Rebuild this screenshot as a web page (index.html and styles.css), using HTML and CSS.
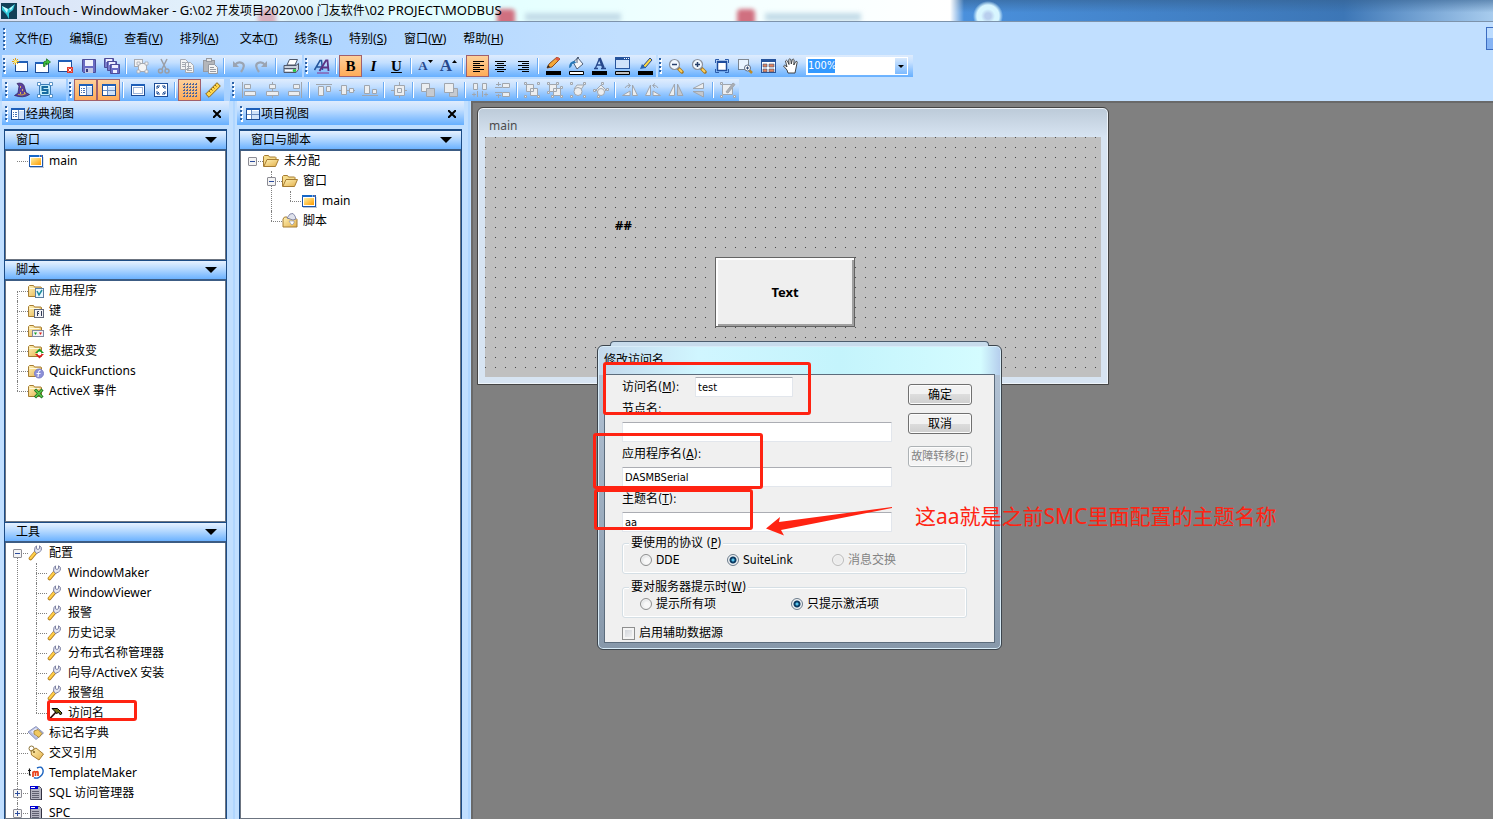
FILE: index.html
```
<!DOCTYPE html>
<html lang="zh-CN">
<head>
    <meta charset="UTF-8">
    <meta name="viewport" content="width=device-width, initial-scale=1.0">
    <title>InTouch - WindowMaker</title>
    <link rel="stylesheet" href="styles.css">
</head>
<body>
<!-- shared icons -->
<svg class="defs" width="0" height="0" aria-hidden="true">
    <defs>
        <linearGradient id="g-folder" x1="0" y1="0" x2="1" y2="1"><stop offset="0" stop-color="#fff2b8"/><stop offset="1" stop-color="#e3b04a"/></linearGradient>
        <linearGradient id="g-orange" x1="0" y1="0" x2="1" y2="1"><stop offset="0" stop-color="#fff0a0"/><stop offset="1" stop-color="#ff9c00"/></linearGradient>
    </defs>
    <symbol id="i-window" viewBox="0 0 16 16">
        <path d="M2 14.5h14V4" fill="none" stroke="#b9c4d6"/>
        <rect x="1.5" y="2.5" width="13" height="11" fill="#fff" stroke="#1c55a8"/>
        <path d="M1 3h14" stroke="#1668c8" stroke-width="2"/>
        <path d="M11 3h1" stroke="#fff"/><path d="M13 3h1" stroke="#ff6a3c"/>
        <rect x="3" y="5" width="10" height="7" fill="url(#g-orange)"/>
    </symbol>
    <symbol id="i-folder" viewBox="0 0 16 16">
        <path d="M.5 13.500V3.500l1-1h4l1 1.500h6.500l.5.500v9z" fill="url(#g-folder)" stroke="#a67c32"/>
        <path d="M1.500 5.500h10" stroke="#fffbe0"/>
    </symbol>
    <symbol id="i-open" viewBox="0 0 16 16">
        <path d="M.5 13.500V3.500l1-1h4l1 1.500h6l.5.500v2" fill="#f6dc8c" stroke="#a67c32"/>
        <path d="M.8 13.500L4 6.500h11.500l-3 7z" fill="url(#g-folder)" stroke="#a67c32"/>
    </symbol>
    <symbol id="i-wrench" viewBox="0 0 16 16">
        <path d="M2.500 13.500L8 7" stroke="#b07a1c" stroke-width="3.600" stroke-linecap="round"/>
        <path d="M2.500 13.200L8 6.700" stroke="#ffcf4a" stroke-width="2.200" stroke-linecap="round"/>
        <path d="M6.500 6L7 2.500 8.500 .8v3l1.500.7 1.500-1V.8l1.800 1.500v3L11.500 7l-3 1.500z" fill="#e4e6f2" stroke="#70759a" stroke-width=".9"/>
    </symbol>
    <symbol id="i-db" viewBox="0 0 16 16">
        <path d="M2.500 1.500h9l2 2v11h-11z" fill="#b4b4c0" stroke="#505060"/>
        <path d="M2 1h8v3H2z" fill="#0000d0"/><path d="M3 2.500h4" stroke="#fff"/>
        <path d="M4 6.500h7M4 8.500h7M4 10.500h7M4 12.500h7" stroke="#606070"/>
        <path d="M13.500 4v11" stroke="#303040"/>
    </symbol>
    <symbol id="i-classic" viewBox="0 0 16 16">
        <rect x="1.500" y="2.500" width="13" height="11" fill="#fff" stroke="#1c4c96"/><path d="M1 3h14" stroke="#1f5fb8" stroke-width="2"/>
        <path d="M9 5h5v8H9z" fill="#cfe2fa"/><path d="M8.500 4v9" stroke="#6a8cc0"/>
        <path d="M3 6.500h1M5 6.500h2M3 8.500h1M5 8.500h2M3 10.500h1M5 10.500h2" stroke="#4a74b4"/>
    </symbol>
    <symbol id="i-project" viewBox="0 0 16 16">
        <rect x="1.500" y="2.500" width="13" height="11" fill="#fff" stroke="#1c4c96"/><path d="M1 3h14" stroke="#1f5fb8" stroke-width="2"/>
        <path d="M7 5h7v8H7z" fill="#cfe2fa"/><path d="M6.500 4v9M2 8.500h12" stroke="#6a8cc0"/>
    </symbol>
</svg>

<div class="app">
    <header class="titlebar">
        <svg class="logo" viewBox="0 0 16 16"><rect width="16" height="16" fill="#123f58"/><path d="M1 3l6 3 7-5-2 6-4 3v6l-3-5-4-4z" fill="#2fc9dc"/><path d="M1 3l6 3-1 4zM8 6l5-4-3 5z" fill="#c7fbff"/></svg>
        <h1>InTouch - WindowMaker - G:\02 <span class="cjk">开发项目</span>2020\00 <span class="cjk">门友软件</span>\02 PROJECT\MODBUS</h1>
        <span class="ghost ghost-first"></span>
        <span class="ghost ghost-second"></span>
        <span class="ghost ghost-third"></span>
    </header>

    <nav class="menubar">
        <span class="grip grip-tall"></span>
        <a href="#" class="first">文件(<u>F</u>)</a>
        <a href="#">编辑(<u>E</u>)</a>
        <a href="#">查看(<u>V</u>)</a>
        <a href="#">排列(<u>A</u>)</a>
        <a href="#" class="spaced">文本(<u>T</u>)</a>
        <a href="#">线条(<u>L</u>)</a>
        <a href="#">特别(<u>S</u>)</a>
        <a href="#">窗口(<u>W</u>)</a>
        <a href="#">帮助(<u>H</u>)</a>
        <button class="mdi-button" aria-label="最小化"></button>
    </nav>

    <div class="toolbars">
        <div class="toolbar-row">
            <div class="toolbar">
                <span class="grip"></span>
                <button class="tool" aria-label="新建窗口"><svg viewBox="0 0 16 16"><rect x="3.500" y="3.500" width="12" height="10" fill="#fff" stroke="#1c4c96"/><path d="M3 4h13" stroke="#1f5fb8" stroke-width="2"/><path d="M3.500 0v7M0 3.500h7M1 1l5 5M6 1L1 6" stroke="#e0a010"/><circle cx="3.500" cy="3.500" r="1.500" fill="#fff27a"/></svg></button>
                <button class="tool" aria-label="打开窗口"><svg viewBox="0 0 16 16"><rect x=".5" y="4.500" width="13" height="10" fill="#fff" stroke="#1c4c96"/><path d="M0 5h14" stroke="#1f5fb8" stroke-width="2"/><path d="M8.500 8.500V5q0-2 3-2V.8L15.500 4l-4 3V5q-1.500 0-1.500 3.500z" fill="#3cc03c" stroke="#176b17" stroke-width=".7"/></svg></button>
                <button class="tool" aria-label="关闭窗口"><svg viewBox="0 0 16 16"><rect x=".5" y="2.500" width="13" height="11" fill="#fff" stroke="#1c4c96"/><path d="M0 3h14" stroke="#1f5fb8" stroke-width="2"/><rect x="9.500" y="9.500" width="5" height="5" fill="#e23a2c" stroke="#e23a2c"/><path d="M10.500 10.500l3 3M13.500 10.500l-3 3" stroke="#fff"/></svg></button>
                <button class="tool" aria-label="保存"><svg viewBox="0 0 16 16"><path d="M1.500 1.500h13v13h-12l-1-1z" fill="#6a6cc4" stroke="#4c4c98"/><path d="M4 2h8v6H4z" fill="#f0f2fc"/><path d="M4 10h8v5H4z" fill="#c4c8e4"/><path d="M5 11h2v3H5z" fill="#393a80"/></svg></button>
                <button class="tool" aria-label="全部保存"><svg viewBox="0 0 16 16"><path d="M.5.500h9v9h-9z" fill="#7a7ccc" stroke="#4c4c98"/><path d="M2 1h6v3H2z" fill="#eef"/><path d="M3.500 3.500h9v9h-9z" fill="#7a7ccc" stroke="#4c4c98"/><path d="M5 4h6v3H5z" fill="#eef"/><path d="M6.500 6.500h9v9h-9z" fill="#6a6cc4" stroke="#4c4c98"/><path d="M8 7h6v3H8zM9 12h4v3H9z" fill="#eef"/></svg></button>
                <span class="sep"></span>
                <button class="tool" aria-label="复制对象"><svg viewBox="0 0 16 16" fill="#f4f4f4" stroke="#a6aab2"><rect x="1.500" y="1.500" width="8" height="7"/><rect x="5.500" y="5.500" width="8" height="8"/><path d="M4 4h3v3H4zM12 4h3v3h-3zM4 12h3v3H4zM12 12h3v3h-3z" stroke-width=".8"/></svg></button>
                <button class="tool" aria-label="剪切"><svg viewBox="0 0 16 16" fill="none" stroke="#9a9ea6" stroke-width="1.500"><path d="M5 1l5 10M11 1L6 11"/><circle cx="4.500" cy="13" r="2"/><circle cx="11" cy="13" r="2"/></svg></button>
                <button class="tool" aria-label="复制"><svg viewBox="0 0 16 16" fill="#f4f4f4" stroke="#a6aab2"><path d="M1.500 1.500h5l3 3v7h-8zM6.500 4.500h5l3 3v7h-8z"/><path d="M8 8.500h4M8 10.500h5M8 12.500h5M3 4.500h3M3 6.500h3M3 8.500h3"/></svg></button>
                <button class="tool" aria-label="粘贴"><svg viewBox="0 0 16 16" stroke="#969aa2"><rect x="1.500" y="2.500" width="11" height="11" fill="#b4b6ba"/><rect x="4.500" y=".5" width="5" height="3" fill="#e4e4e4"/><path d="M6.500 6.500h6l3 3v6h-9z" fill="#f4f4f4"/><path d="M8 9.500h4M8 11.500h6M8 13.500h6"/></svg></button>
                <span class="sep"></span>
                <button class="tool" aria-label="撤消"><svg viewBox="0 0 16 16" fill="none" stroke="#9ba4b2" stroke-width="2.200"><path d="M4 7q3-4 7-2t-1 9"/><path d="M2 3v6h6z" fill="#9ba4b2" stroke="none"/></svg></button>
                <button class="tool" aria-label="重做"><svg viewBox="0 0 16 16" fill="none" stroke="#9ba4b2" stroke-width="2.200"><path d="M11 7q-3-4-7-2t1 9"/><path d="M13 3v6H7z" fill="#9ba4b2" stroke="none"/></svg></button>
                <span class="sep"></span>
                <button class="tool" aria-label="打印"><svg viewBox="0 0 16 16" stroke="#4e5668"><path d="M4 7L6.500 1.500h8L12 7z" fill="#fff"/><path d="M1 7.500h12l2.500-2v6l-2.500 3H1z" fill="#c8d0dc"/><path d="M1 10.500h12" /><path d="M2 12.500h7" stroke="#fff"/><path d="M10 12.500h3" stroke="#1fc43a" stroke-width="2.500"/></svg></button>
            </div>
            <div class="toolbar">
                <span class="grip"></span>
                <button class="tool" aria-label="字体"><svg viewBox="0 0 16 16"><path d="M.5 12L6 2.500h1.500L8.500 12M3 9h5" fill="none" stroke="#24559c" stroke-width="1.500"/><path d="M5.500 13L12 2.500h1.500l1 10.500M8 9.500h6" fill="none" stroke="#5c3484" stroke-width="1.800"/><path d="M3 15h12" stroke="#8a348c"/></svg></button>
                <span class="sep"></span>
                <button class="tool active glyph"><b>B</b></button>
                <button class="tool glyph"><i>I</i></button>
                <button class="tool glyph"><u>U</u></button>
                <span class="sep"></span>
                <button class="tool glyph glyph-size glyph-small">A<svg viewBox="0 0 5 3"><path d="M0 0h5L2.500 3z"/></svg></button>
                <button class="tool glyph glyph-size">A<svg viewBox="0 0 5 3"><path d="M0 3h5L2.500 0z"/></svg></button>
                <span class="sep"></span>
                <button class="tool active" aria-label="左对齐"><svg viewBox="0 0 16 16" stroke="#000"><path d="M3 3.500h11M3 5.500h7M3 7.500h11M3 9.500h7M3 11.500h11M3 13.500h7"/></svg></button>
                <button class="tool" aria-label="居中"><svg viewBox="0 0 16 16" stroke="#000"><path d="M2 3.500h11M4 5.500h7M2 7.500h11M4 9.500h7M2 11.500h11M4 13.500h7"/></svg></button>
                <button class="tool" aria-label="右对齐"><svg viewBox="0 0 16 16" stroke="#000"><path d="M2 3.500h11M6 5.500h7M2 7.500h11M6 9.500h7M2 11.500h11M6 13.500h7"/></svg></button>
                <span class="sep"></span>
                <button class="tool" aria-label="线条颜色"><svg class="tall" viewBox="0 0 16 18"><path d="M2 11l2-4 8-7 3 2-8 8z" fill="#f4a838" stroke="#8c4b1c"/><path d="M12 0l3 2-2 2-3-2z" fill="#e05848"/><path d="M2 11l1-3 2 2z" fill="#222"/><path d="M1 14h15v4H1z"/></svg></button>
                <button class="tool" aria-label="填充颜色"><svg class="tall" viewBox="0 0 16 18"><path d="M5 5l5-4 5 6-6 5z" fill="#f4f6f8" stroke="#50607a"/><path d="M9 6V1q1-2 2 0" fill="none" stroke="#50607a"/><path d="M7 4Q1 4 1 11q3-1 3-4l4-1z" fill="#2677b8"/><path d="M1.500 14.500h14v3h-14z" fill="#fff" stroke="#000"/></svg></button>
                <button class="tool" aria-label="文本颜色"><svg class="tall" viewBox="0 0 16 18"><path d="M3 11.500h4M10 11.500h5M4.500 11L8.500 1.500M6 8h5" fill="none" stroke="#27488c" stroke-width="1.300"/><path d="M8.500 1L12.500 11" stroke="#27488c" stroke-width="2.600"/><path d="M1 14h15v4H1z"/></svg></button>
                <button class="tool" aria-label="窗口颜色"><svg class="tall" viewBox="0 0 16 18"><rect x="1.500" y=".5" width="14" height="11" fill="#cfe2fb" stroke="#27549c"/><path d="M1 1.500h15" stroke="#27549c" stroke-width="3"/><path d="M10 1.500h1M12 1.500h1M14 1.500h1" stroke="#fff"/><path d="M1.500 14.500h14v3h-14z" fill="#c0c0c0" stroke="#000"/></svg></button>
                <button class="tool" aria-label="透明颜色"><svg class="tall" viewBox="0 0 16 18"><path d="M6 9l7-8 2 2-7 8z" fill="#ffd83c" stroke="#27488c"/><path d="M3 12l2-5 4 4z" fill="#2a64b0"/><path d="M1 14h15v4H1z"/></svg></button>
            </div>
            <div class="toolbar">
                <span class="grip"></span>
                <button class="tool" aria-label="缩小"><svg viewBox="0 0 16 16"><path d="M10.500 10.500l3.500 3.500" stroke="#a8781c" stroke-width="3.500" stroke-linecap="round"/><path d="M11 11l3 3" stroke="#ffd260" stroke-width="2"/><circle cx="6.500" cy="6.500" r="5" fill="#f2f8ff" stroke="#8a909c" stroke-width="1.200"/><path d="M4 6.500h5" stroke="#28406c" stroke-width="1.500"/></svg></button>
                <button class="tool" aria-label="放大"><svg viewBox="0 0 16 16"><path d="M10.500 10.500l3.500 3.500" stroke="#a8781c" stroke-width="3.500" stroke-linecap="round"/><path d="M11 11l3 3" stroke="#ffd260" stroke-width="2"/><circle cx="6.500" cy="6.500" r="5" fill="#f2f8ff" stroke="#8a909c" stroke-width="1.200"/><path d="M4 6.500h5M6.500 4v5" stroke="#28406c" stroke-width="1.500"/></svg></button>
                <button class="tool" aria-label="适合窗口"><svg viewBox="0 0 16 16"><rect x="3.500" y="3.500" width="9" height="9" fill="#fff" stroke="#1f4c9c" stroke-width="1.500"/><path d="M3 4h10" stroke="#1f4c9c" stroke-width="2"/><path d="M1.500 5V1.500H5M11 1.500h3.500V5M14.500 11v3.500H11M5 14.500H1.500V11" fill="none" stroke="#2b5cac"/></svg></button>
                <button class="tool" aria-label="区域缩放"><svg viewBox="0 0 16 16"><rect x="1.500" y="1.500" width="10" height="10" fill="#e9f3ff" stroke="#222" stroke-dasharray="1 1"/><path d="M12 12l3 3" stroke="#c08c24" stroke-width="2.500"/><circle cx="10.500" cy="10" r="3" fill="#fff" stroke="#5e6c84"/><path d="M9 10h3M10.500 8.500v3" stroke="#28406c"/></svg></button>
                <button class="tool" aria-label="缩放面板"><svg viewBox="0 0 16 16"><rect x="1.500" y="1.500" width="14" height="13" fill="#fff" stroke="#27549c"/><path d="M1 2.500h15" stroke="#27549c" stroke-width="3"/><path d="M3 6h4v3H3zM9 6h5v3H9zM3 11h4v3H3zM9 11h5v3H9z" fill="#e4845c" stroke="#34507c" stroke-width=".6"/></svg></button>
                <button class="tool" aria-label="平移"><svg viewBox="0 0 16 16"><path d="M5 15l-1-3-3.500-4q.5-1.500 2.500 0l1 1-1.500-6q1-1.500 2 0L6 6.500 5.800 1.500q1-1.300 2 0L8.300 6l1-4.500q1-1 1.800.3L10.800 7l2-3.500q1.300-.6 1.400.7L13 10l-1 5z" fill="#fff" stroke="#333" stroke-width=".9"/></svg></button>
                <div class="combo">
                    <select aria-label="缩放比例"><option>100%</option><option>200%</option></select>
                    <span class="combo-arrow"></span>
                </div>
            </div>
        </div>
        <div class="toolbar-row">
            <div class="toolbar toolbar-wizard">
                <span class="grip"></span>
                <button class="tool" aria-label="向导"><svg viewBox="0 0 16 16"><path d="M3 1.500q5-1.500 7 2l2 7 3.500 2q-6 4-15 1L4 11l1-7z" fill="#5c409c" stroke="#2e1c58" stroke-width=".7"/><path d="M6 5h1M8 8h1M6 11h1M10 11h1" stroke="#ffd84c" stroke-width="1.500"/><path d="M4 12.500q4 1.500 8-1" stroke="#c8a43c" fill="none"/></svg></button>
                <button class="tool" aria-label="符号"><svg viewBox="0 0 16 16"><rect x="2.500" y="2.500" width="11" height="11" fill="#bfeaf8" stroke="#3a7cb8"/><path d="M11 5H5.500v3h5v3H5" fill="none" stroke="#166aa0" stroke-width="2"/><path d="M.5.500h3v3h-3zM12.500.500h3v3h-3zM.5 12.500h3v3h-3zM12.500 12.500h3v3h-3z" fill="#fff" stroke="#3a7cb8" stroke-width=".8"/></svg></button>
            </div>
            <div class="toolbar">
                <span class="grip"></span>
                <button class="tool active" aria-label="经典视图"><svg viewBox="0 0 16 16"><use href="#i-classic"/></svg></button>
                <button class="tool active" aria-label="项目视图"><svg viewBox="0 0 16 16"><use href="#i-project"/></svg></button>
                <span class="sep"></span>
                <button class="tool" aria-label="隐藏面板"><svg viewBox="0 0 16 16"><rect x="1.500" y="2.500" width="13" height="11" fill="#fff" stroke="#1c4c96"/><path d="M1 3h14" stroke="#1f5fb8" stroke-width="2"/><rect x="3.500" y="5.500" width="9" height="6" fill="#fff" stroke="#9db4d8"/></svg></button>
                <button class="tool" aria-label="全屏"><svg viewBox="0 0 16 16"><rect x="1.500" y="1.500" width="13" height="13" fill="#fff" stroke="#1c4c96"/><path d="M4 7V4h3M4 4l2 2M9 4h3v3M12 4l-2 2M12 9v3H9M12 12l-2-2M7 12H4V9M4 12l2-2" fill="none" stroke="#1c4c96"/></svg></button>
                <span class="sep"></span>
                <button class="tool active" aria-label="网格"><svg viewBox="0 0 16 16" stroke="#4c649c"><path d="M1 2.500h14M1 5.500h14M1 8.500h14M1 11.500h14M1 14.500h14M2.500 1v14M5.500 1v14M8.500 1v14M11.500 1v14M14.500 1v14" stroke-dasharray="2 1"/></svg></button>
                <button class="tool" aria-label="标尺"><svg viewBox="0 0 16 16"><path d="M.7 12L12 .7 15.300 4 4 15.300z" fill="#ffd64a" stroke="#8c6414"/><path d="M4 9l1.500 1.500M6 7l1.500 1.500M8 5l1.500 1.500M10 3l1.500 1.500" stroke="#8c6414"/></svg></button>
            </div>
            <div class="toolbar toolbar-arrange">
                <span class="grip"></span>
                <button class="tool" aria-label="左边对齐"><svg class="dim" viewBox="0 0 16 16"><path d="M1.500 0v16"/><path d="M3.500 2.500h6v4h-6zM3.500 9.500h11v4h-11z"/></svg></button>
                <button class="tool" aria-label="水平居中"><svg class="dim" viewBox="0 0 16 16"><path d="M8.500 0v16"/><path d="M5.500 2.500h6v4h-6zM2.500 9.500h12v4h-12z"/></svg></button>
                <button class="tool" aria-label="右边对齐"><svg class="dim" viewBox="0 0 16 16"><path d="M14.500 0v16"/><path d="M6.500 2.500h6v4h-6zM1.500 9.500h11v4h-11z"/></svg></button>
                <span class="sep"></span>
                <button class="tool" aria-label="顶部对齐"><svg class="dim" viewBox="0 0 16 16"><path d="M0 2.500h16"/><path d="M2.500 4.500h5v9h-5zM10.500 4.500h4v5h-4z"/></svg></button>
                <button class="tool" aria-label="垂直居中"><svg class="dim" viewBox="0 0 16 16"><path d="M0 8.500h16"/><path d="M2.500 3.500h5v9h-5zM10.500 6.500h4v4h-4z"/></svg></button>
                <button class="tool" aria-label="底部对齐"><svg class="dim" viewBox="0 0 16 16"><path d="M0 13.500h16"/><path d="M2.500 3.500h5v8h-5zM10.500 7.500h4v4h-4z"/></svg></button>
                <span class="sep"></span>
                <button class="tool" aria-label="中心对齐"><svg class="dim" viewBox="0 0 16 16"><path d="M8.500 0v16M0 8.500h16"/><path d="M3.500 3.500h10v10h-10zM6.500 6.500h4v4h-4z"/></svg></button>
                <span class="sep"></span>
                <button class="tool" aria-label="移到后面"><svg class="dim" viewBox="0 0 16 16"><path d="M1.500 1.500h8v8h-8z"/><path d="M6.500 6.500h8v8h-8z" fill="#c6cad0"/></svg></button>
                <button class="tool" aria-label="移到前面"><svg class="dim" viewBox="0 0 16 16"><path d="M6.500 6.500h8v8h-8z" fill="#c6cad0"/><path d="M1.500 1.500h9v9h-9z"/></svg></button>
                <span class="sep"></span>
                <button class="tool" aria-label="水平间距"><svg class="dim" viewBox="0 0 16 16"><path d="M1.500 1.500h4v6h-4zM10.500 1.500h4v6h-4z"/><path d="M5.500 9v6M10.500 9v6M0 12.500h4M12 12.500h4M2 10.500v4M14 10.500v4"/></svg></button>
                <button class="tool" aria-label="垂直间距"><svg class="dim" viewBox="0 0 16 16"><path d="M7.500 1.500h7v4h-7zM7.500 10.500h7v4h-7z"/><path d="M0 5.500h7M0 10.500h7M3.500 0v4M3.500 12v4M1 2.500h5M1 13.500h5"/></svg></button>
                <span class="sep"></span>
                <button class="tool" aria-label="组合单元"><svg class="dim" viewBox="0 0 16 16"><path d="M2.500 2.500h7v7h-7zM6.500 6.500h7v7h-7z"/><path d="M.5.500h2v2h-2zM13.500.500h2v2h-2zM.5 13.500h2v2h-2zM13.500 13.500h2v2h-2z"/></svg></button>
                <button class="tool" aria-label="分解单元"><svg class="dim" viewBox="0 0 16 16"><path d="M2.500 2.500h7v7h-7zM6.500 6.500h7v7h-7z"/><path d="M.5.500h2v2h-2zM9.500.500h2v2h-2zM.5 9.500h2v2h-2zM13.500 4.500h2v2h-2zM13.500 13.500h2v2h-2zM4.500 13.500h2v2h-2z"/></svg></button>
                <button class="tool" aria-label="组合符号"><svg class="dim" viewBox="0 0 16 16"><path d="M7 3h7L10 9 4 7z"/><circle cx="8" cy="9.500" r="4"/><path d="M.5.500h2v2h-2zM13.500.500h2v2h-2zM.5 13.500h2v2h-2zM13.500 13.500h2v2h-2z"/></svg></button>
                <button class="tool" aria-label="分解符号"><svg class="dim" viewBox="0 0 16 16"><path d="M3 8l5-5 5 5-5 5z"/><circle cx="8" cy="10" r="3.500"/><path d="M8.500.500h2v2h-2zM.5 7.500h2v2h-2zM13.500 6.500h2v2h-2zM4.500 13.500h2v2h-2z"/></svg></button>
                <span class="sep"></span>
                <button class="tool" aria-label="顺时针旋转"><svg class="dim" viewBox="0 0 16 16"><path d="M.5 13.500H8V9zM10.500 13.500V3l5 10.500z"/><path d="M3 6q1-3 5-2.500M6 1.500l2.500 2L6 6" fill="none"/></svg></button>
                <button class="tool" aria-label="逆时针旋转"><svg class="dim" viewBox="0 0 16 16"><path d="M15.500 13.500H8V9zM5.500 13.500V3L.5 13.500z"/><path d="M13 6q-1-3-5-2.500M10 1.500l-2.500 2L10 6" fill="none"/></svg></button>
                <button class="tool" aria-label="水平翻转"><svg class="dim" viewBox="0 0 16 16"><path d="M6.500 13.500V2L1 13.500z"/><path d="M9.500 13.500V2L15 13.500z" fill="#c4c8ce"/></svg></button>
                <button class="tool" aria-label="垂直翻转"><svg class="dim" viewBox="0 0 16 16"><path d="M12.500 6.500H2L12.500 1z"/><path d="M12.500 9.500H2L12.500 15z" fill="#c4c8ce"/></svg></button>
                <span class="sep"></span>
                <button class="tool" aria-label="编辑对象"><svg class="dim" viewBox="0 0 16 16"><path d="M2.500 2.500h10v10h-10z"/><path d="M.5.500h2v2h-2zM.5 13.500h2v2h-2zM13.500 13.500h2v2h-2z"/><path d="M6 10l7-9 2 1.500L8 11z" fill="#aaaeb4"/></svg></button>
            </div>
        </div>
    </div>

    <main class="main">
        <aside class="pane">
            <header class="pane-title">
                <span class="grip"></span>
                <svg class="icon" viewBox="0 0 16 16"><use href="#i-classic"/></svg>
                <h2>经典视图</h2>
                <button class="pane-close" aria-label="关闭"><svg viewBox="0 0 8 8"><path d="M0 0l8 8M8 0L0 8" stroke="#000" stroke-width="2"/></svg></button>
            </header>
            <div class="pane-body">
                <section class="section section-windows">
                    <h3>窗口<span class="caret"></span></h3>
                    <ul class="tree">
                        <li><div class="node"><svg class="icon" viewBox="0 0 16 16"><use href="#i-window"/></svg>main</div></li>
                    </ul>
                </section>
                <section class="section section-scripts">
                    <h3>脚本<span class="caret"></span></h3>
                    <ul class="tree">
                        <li><div class="node"><svg class="icon" viewBox="0 0 16 16"><use href="#i-folder"/><rect x="7.500" y="5.500" width="8" height="9" fill="#e6f6ff" stroke="#5a7ca0"/><path d="M9 8l2 4 3-5" fill="none" stroke="#1c8c9c" stroke-width="1.500"/></svg>应用程序</div></li>
                        <li><div class="node"><svg class="icon" viewBox="0 0 16 16"><use href="#i-folder"/><rect x="6.500" y="6.500" width="9" height="8" fill="#f2f2f6" stroke="#60687c"/><path d="M9.500 13V8.500H11M9 10.500h2M13.500 8v5" fill="none" stroke="#333c58"/></svg>键</div></li>
                        <li><div class="node"><svg class="icon" viewBox="0 0 16 16"><use href="#i-folder"/><rect x="4.500" y="7.500" width="11" height="6" fill="#f2f2f6" stroke="#8088a0"/><path d="M6 9.500h3l-1.500 2.500z" fill="#10a020"/><path d="M11 9.500h3l-1.500 2.500z" fill="#e02018"/></svg>条件</div></li>
                        <li><div class="node"><svg class="icon" viewBox="0 0 16 16"><use href="#i-folder"/><path d="M7 10l4.500-4.500L16 10z" fill="#149c24"/><path d="M7 11l4.500 4.500L16 11z" fill="#d81c1c"/><circle cx="11.500" cy="10.500" r="2" fill="#fff"/></svg>数据改变</div></li>
                        <li><div class="node"><svg class="icon" viewBox="0 0 16 16"><use href="#i-folder"/><circle cx="11" cy="10.500" r="4.500" fill="#8c90d8" stroke="#7c80c8"/><path d="M12.500 7.500q-2-.5-2 2L10 14M8.500 10.500h4" fill="none" stroke="#fff"/></svg>QuickFunctions</div></li>
                        <li><div class="node"><svg class="icon" viewBox="0 0 16 16"><use href="#i-folder"/><path d="M7 6.500l7.500 8M14.500 6.500L7 14.500" stroke="#1c6c24" stroke-width="3"/><path d="M7.500 7l6.500 7M14 7l-6.500 7" stroke="#5cc848" stroke-width="1.500"/></svg>ActiveX 事件</div></li>
                    </ul>
                </section>
                <section class="section section-tools">
                    <h3>工具<span class="caret"></span></h3>
                    <ul class="tree">
                        <li>
                            <button class="expander" aria-label="折叠"></button>
                            <div class="node"><svg class="icon" viewBox="0 0 16 16"><use href="#i-wrench"/></svg>配置</div>
                            <ul>
                                <li><div class="node"><svg class="icon" viewBox="0 0 16 16"><use href="#i-wrench"/></svg>WindowMaker</div></li>
                                <li><div class="node"><svg class="icon" viewBox="0 0 16 16"><use href="#i-wrench"/></svg>WindowViewer</div></li>
                                <li><div class="node"><svg class="icon" viewBox="0 0 16 16"><use href="#i-wrench"/></svg>报警</div></li>
                                <li><div class="node"><svg class="icon" viewBox="0 0 16 16"><use href="#i-wrench"/></svg>历史记录</div></li>
                                <li><div class="node"><svg class="icon" viewBox="0 0 16 16"><use href="#i-wrench"/></svg>分布式名称管理器</div></li>
                                <li><div class="node"><svg class="icon" viewBox="0 0 16 16"><use href="#i-wrench"/></svg>向导/ActiveX 安装</div></li>
                                <li><div class="node"><svg class="icon" viewBox="0 0 16 16"><use href="#i-wrench"/></svg>报警组</div></li>
                                <li><div class="node"><svg class="icon" viewBox="0 0 16 16"><path d="M2.500 14l7.500-8" stroke="#2c0808" stroke-width="1.800"/><path d="M5 3.500h5.500L15 8l-1.500 2-2-2.500-2 1-2-2.500z" fill="#6c6c14" stroke="#000"/></svg>访问名</div></li>
                            </ul>
                        </li>
                        <li><div class="node"><svg class="icon" viewBox="0 0 16 16"><path d="M0 7l8-5.500L15.500 8 8 14.500z" fill="#b8c0e4" stroke="#9098bc"/><path d="M3 6.500L8 3l5 5-4.500 4z" fill="#e8ecff"/><path d="M6 6l4-1.500 4 4-3 4-5-3.500z" fill="#f0c860" stroke="#98762c" stroke-width=".8"/></svg>标记名字典</div></li>
                        <li><div class="node"><svg class="icon" viewBox="0 0 16 16"><path d="M3 6l5-3 7.500 6-4.500 6-7.500-5z" fill="url(#g-folder)" stroke="#a67c32"/><circle cx="3.500" cy="3.500" r="2.500" fill="none" stroke="#8c7438"/><circle cx="6" cy="7" r="1" fill="#7c5c1c"/></svg>交叉引用</div></li>
                        <li><div class="node"><svg class="icon" viewBox="0 0 16 16"><path d="M1.500 3.500v6.500h1.500M0 5.500h3" fill="none" stroke="#111" stroke-width="1.200"/><path d="M5 12V6.500M5 7.500q2-2 2.500 0V11M7.500 7.500q2.500-2 2.500 0V11" fill="none" stroke="#e83c14" stroke-width="1.700"/><path d="M9 3q5-2.500 6 2t-5 8q-3 .5-4-.5" fill="none" stroke="#1c64c0" stroke-width="1.400"/></svg>TemplateMaker</div></li>
                        <li><button class="expander collapsed" aria-label="展开"></button><div class="node"><svg class="icon" viewBox="0 0 16 16"><use href="#i-db"/></svg>SQL 访问管理器</div></li>
                        <li><button class="expander collapsed" aria-label="展开"></button><div class="node"><svg class="icon" viewBox="0 0 16 16"><use href="#i-db"/></svg>SPC</div></li>
                    </ul>
                </section>
            </div>
        </aside>

        <aside class="pane">
            <header class="pane-title">
                <span class="grip"></span>
                <svg class="icon" viewBox="0 0 16 16"><use href="#i-project"/></svg>
                <h2>项目视图</h2>
                <button class="pane-close" aria-label="关闭"><svg viewBox="0 0 8 8"><path d="M0 0l8 8M8 0L0 8" stroke="#000" stroke-width="2"/></svg></button>
            </header>
            <div class="pane-body">
                <section class="section section-tools">
                    <h3>窗口与脚本<span class="caret"></span></h3>
                    <ul class="tree">
                        <li>
                            <button class="expander" aria-label="折叠"></button>
                            <div class="node"><svg class="icon" viewBox="0 0 16 16"><use href="#i-open"/></svg>未分配</div>
                            <ul>
                                <li>
                                    <button class="expander" aria-label="折叠"></button>
                                    <div class="node"><svg class="icon" viewBox="0 0 16 16"><use href="#i-open"/></svg>窗口</div>
                                    <ul>
                                        <li><div class="node"><svg class="icon" viewBox="0 0 16 16"><use href="#i-window"/></svg>main</div></li>
                                    </ul>
                                </li>
                                <li><div class="node"><svg class="icon" viewBox="0 0 16 16"><path d="M1 14V6l1.500-2H5l1 1.500h8l1 1V14z" fill="url(#g-folder)" stroke="#a67c32"/><path d="M5 5l3-4 3-.5L13 3l1 3-3 1-3-1z" fill="#dfe2ec" stroke="#70759a" stroke-width=".8"/><path d="M7 8h5v2l-2 2-1-1z" fill="#fff" stroke="#8088a8" stroke-width=".6"/></svg>脚本</div></li>
                            </ul>
                        </li>
                    </ul>
                </section>
            </div>
        </aside>

        <section class="workspace">
            <div class="window">
                <h2>main</h2>
                <div class="canvas">
                    <span class="hash">##</span>
                    <button class="canvas-button">Text</button>
                </div>
            </div>

            <div class="dialog">
                <h2>修改访问名</h2>
                <form class="client">
                    <div class="top">
                        <div class="fields">
                            <div class="name-row">
                                <label for="access">访问名(<u>M</u>):</label>
                                <input type="text" id="access" value="test">
                            </div>
                            <label for="node">节点名:</label>
                            <input type="text" id="node">
                            <label for="application">应用程序名(<u>A</u>):</label>
                            <input type="text" id="application" value="DASMBSerial">
                            <label for="topic">主题名(<u>T</u>):</label>
                            <input type="text" id="topic" value="aa">
                        </div>
                        <div class="buttons">
                            <button type="button">确定</button>
                            <button type="button">取消</button>
                            <button type="button" class="failover" disabled>故障转移(<u>F</u>)</button>
                        </div>
                    </div>
                    <fieldset>
                        <legend>要使用的协议 (<u>P</u>)</legend>
                        <div class="protocols">
                            <label><input type="radio" name="protocol">DDE</label>
                            <label><input type="radio" name="protocol" checked>SuiteLink</label>
                            <label class="off"><input type="radio" name="protocol" disabled>消息交换</label>
                        </div>
                    </fieldset>
                    <fieldset>
                        <legend>要对服务器提示时(<u>W</u>)</legend>
                        <div class="advise">
                            <label><input type="radio" name="advise">提示所有项</label>
                            <label><input type="radio" name="advise" checked>只提示激活项</label>
                        </div>
                    </fieldset>
                    <label class="secondary"><input type="checkbox">启用辅助数据源</label>
                </form>
            </div>
        </section>
    </main>

    <!-- marks drawn over the windows -->
    <span class="mark mark-access"></span>
    <span class="mark mark-application"></span>
    <span class="mark mark-topic"></span>
    <span class="mark mark-tree"></span>
    <svg class="arrow" viewBox="0 0 128 32"><path d="M1 23.500L15 12l-1 5L127 2v1L16 25l3 5.500z" fill="#ff2312"/></svg>
    <p class="note">这aa就是之前SMC里面配置的主题名称</p>
</div>
</body>
</html>
```
FILE: styles.css
```
* {
    box-sizing: border-box;
}

body {
    margin: 0;
    font: 12px/20px "Noto Sans", "Noto Sans CJK SC", sans-serif;
    color: #000;
}

h1, h2, h3, p, ul {
    margin: 0;
    padding: 0;
    font-size: 12px;
    font-weight: normal;
    list-style: none;
}

button {
    padding: 0;
    border: none;
    background: none;
    font: inherit;
    color: inherit;
}

.defs {
    position: absolute;
}

.app {
    position: relative;
    display: flex;
    flex-direction: column;
    height: 100vh;
    overflow: hidden;
    background: linear-gradient(90deg, #9dcbff, #c1dfff 620px);
}

/* title bar */
.titlebar {
    position: relative;
    display: flex;
    align-items: center;
    gap: 4px;
    height: 22px;
    border-bottom: 1px solid #7d93ab;
    overflow: hidden;
    background:
        linear-gradient(90deg, #d9e2f6, #e4f4fd 250px, #e2ffff 480px, #f2ffff 700px, #fff 950px, transparent 964px),
        radial-gradient(circle at 988px 16px, #b9cfee 3px, #d8f6ff 7px, #d8f6ff 11px, transparent 15px),
        linear-gradient(#34608f99, transparent 60%),
        linear-gradient(90deg, #4a90dc 964px, #3c76b6 90%, #a8ccee);
}

.titlebar h1 {
    position: relative;
    z-index: 1;
    font-size: 13px;
    white-space: nowrap;
}

.cjk {
    font-size: 12px;
}

.logo {
    width: 16px;
    height: 16px;
    margin-left: 1px;
}

.ghost {
    position: absolute;
    top: 9px;
    width: 18px;
    height: 18px;
    border-radius: 4px;
    background: #d07080;
    filter: blur(2px);
}

.ghost::after {
    content: "";
    position: absolute;
    left: 28px;
    top: 4px;
    width: 96px;
    height: 8px;
    background: #c3dce8;
    filter: blur(1px);
}

.ghost-first {
    left: 258px;
    opacity: .5;
}

.ghost-second {
    left: 497px;
}

.ghost-third {
    left: 737px;
}

/* menu */
.menubar {
    display: flex;
    align-items: center;
    height: 33px;
    padding-left: 2px;
}

.menubar a {
    margin-left: 9px;
    padding: 0 4px;
    color: #000;
    text-decoration: none;
}

.menubar .first {
    margin-left: 3px;
}

.menubar .spaced {
    margin-left: 13px;
}

.mdi-button {
    width: 7px;
    height: 23px;
    margin-left: auto;
    border: 1px solid #3c6cc0;
    border-right: none;
    background: linear-gradient(#bcdcff 50%, #86b4f4 50%);
}

.grip {
    flex: none;
    width: 3px;
    height: 16px;
    margin: 0 2px 0 1px;
    background: repeating-linear-gradient(#2c62a8 0 2px, transparent 2px 4px) 0 0 / 2px 100% no-repeat,
        repeating-linear-gradient(#fff 0 3px, transparent 3px 4px) 1px 1px / 2px 100% no-repeat;
}

.grip-tall {
    height: 22px;
}

/* toolbars */
.toolbars {
    display: flex;
    flex-direction: column;
    gap: 2px;
}

.toolbar-row {
    display: flex;
    gap: 2px;
    padding-left: 2px;
}

.toolbar {
    display: flex;
    align-items: center;
    height: 22px;
    background: linear-gradient(#dfecfd, #c3dfff 35%, #8fc4ff 70%, #67b0ff);
}

.toolbar-wizard {
    padding: 0 10px 0 2px;
}

.toolbar-arrange {
    margin-left: 4px;
    padding-left: 1px;
}

.tool {
    display: flex;
    align-items: center;
    justify-content: center;
    width: 23px;
    height: 22px;
}

.tool svg {
    width: 16px;
    height: 16px;
}

.tool .tall {
    height: 18px;
}

.tool .dim {
    fill: #eceef0;
    stroke: #a0a6ae;
}

.tool.active {
    border: 1px solid #a0606c;
    background: linear-gradient(#fdd09a, #ffac58);
}

.glyph {
    font: 15px/20px "Liberation Serif", serif;
}

.glyph b, .glyph i, .glyph u {
    font-weight: bold;
}

.glyph-size {
    color: #27488c;
    font-size: 17px;
    font-weight: bold;
}

.glyph-small {
    font-size: 13px;
}

.tool.glyph-size svg {
    width: 5px;
    height: 3px;
    margin-bottom: 10px;
    fill: #000;
}

.sep {
    width: 6px;
    height: 16px;
    background: linear-gradient(90deg, transparent 2px, #6cacf4 2px 3px, #fff 3px 4px, transparent 4px);
}

.combo {
    display: flex;
    align-items: center;
    width: 102px;
    height: 18px;
    margin: 0 5px 0 4px;
    background: #fff;
}

.combo select {
    flex: 1;
    height: 14px;
    padding: 0 0 0 2px;
    border: none;
    appearance: none;
    background: linear-gradient(#3399ff, #3399ff) 2px 0 / 27px 14px no-repeat;
    color: #fff;
    font: 11px/14px "DejaVu Sans Condensed", "Liberation Sans", sans-serif;
}

.combo-arrow {
    display: flex;
    align-items: center;
    justify-content: center;
    width: 12px;
    height: 16px;
    margin-right: 1px;
    background: linear-gradient(#d8e9fd, #7cbaff);
}

.combo-arrow::after {
    content: "";
    border: 3px solid transparent;
    border-top-color: #000;
    border-bottom: none;
}

/* panes */
.main {
    flex: 1;
    display: flex;
    min-height: 0;
    background: #c1dfff;
}

.pane {
    display: flex;
    flex-direction: column;
    width: 235px;
    padding: 0 4px 0 2px;
    border-right: 2px solid #b0d6ff;
}

.pane-title {
    display: flex;
    align-items: center;
    height: 24px;
    padding: 2px 8px 0 2px;
    background: linear-gradient(#dfecfd, #c3dfff 35%, #8fc4ff 70%, #67b0ff);
}

.pane-close {
    display: flex;
    width: 8px;
    margin-left: auto;
}

.icon {
    flex: none;
    width: 16px;
    height: 16px;
}

.pane-body {
    flex: 1;
    display: flex;
    flex-direction: column;
    min-height: 0;
    margin: 4px 2px 0;
    border: 1px solid #1c4c86;
    border-bottom: none;
}

.section {
    display: flex;
    flex-direction: column;
    min-height: 0;
    background: #fff;
}

.section-windows {
    flex: 0 0 130px;
}

.section-scripts {
    flex: 0 0 262px;
}

.section-tools {
    flex: 1;
}

.section h3 {
    flex: none;
    display: flex;
    align-items: center;
    justify-content: space-between;
    height: 21px;
    padding: 0 9px 0 11px;
    border-top: 1px solid #1c4c86;
    border-bottom: 2px solid #3c5c84;
    background: linear-gradient(#e6f1ff, #b4d8ff 45%, #6cb2ff);
}

.caret {
    border: 6px solid transparent;
    border-top-color: #000;
    border-bottom: none;
}

.section > .tree {
    flex: 1;
    overflow: hidden;
    border: 1px solid #6c7480;
    border-top: none;
}

.tree li {
    position: relative;
}

.tree ul {
    margin-left: 19px;
}

/* dotted connectors */
.tree li::before {
    content: "";
    position: absolute;
    top: 0;
    bottom: 0;
    left: 11px;
    border-left: 1px dotted #808080;
}

.tree > li:first-child::before {
    top: 10px;
}

.tree li:last-child::before {
    bottom: auto;
    height: 10px;
}

.tree > li:only-child::before {
    display: none;
}

.tree li::after {
    content: "";
    position: absolute;
    top: 10px;
    left: 11px;
    width: 11px;
    border-top: 1px dotted #808080;
}

.node {
    display: flex;
    align-items: center;
    gap: 5px;
    height: 20px;
    padding-left: 22px;
    line-height: 16px;
    white-space: nowrap;
}

.expander {
    position: absolute;
    z-index: 1;
    top: 6px;
    left: 7px;
    width: 9px;
    height: 9px;
    border: 1px solid #8c8c94;
    border-radius: 1px;
    background: linear-gradient(#2c4c9c, #2c4c9c) center / 5px 1px no-repeat, #f4f4f4;
}

.expander.collapsed {
    background: linear-gradient(#2c4c9c, #2c4c9c) center / 5px 1px no-repeat,
        linear-gradient(#2c4c9c, #2c4c9c) center / 1px 5px no-repeat, #f4f4f4;
}

/* workspace */
.workspace {
    flex: 1;
    position: relative;
    margin-left: 1px;
    border-top: 2px solid #696969;
    border-left: 2px solid #696969;
    background: #808080;
}

.window {
    position: absolute;
    left: 4px;
    top: 4px;
    width: 632px;
    height: 278px;
    padding: 0 7px 7px;
    border: 1px solid #444;
    border-radius: 6px 6px 0 0;
    background: linear-gradient(#bccad8, #d7e4f2 29px);
    box-shadow: inset 0 0 0 1px #eef4fa;
}

.window h2 {
    height: 29px;
    padding: 8px 0 0 4px;
    color: #4c4c4c;
}

.canvas {
    position: relative;
    height: 240px;
    background: conic-gradient(from 270deg at 1px 1px, #444 90deg, #c0c0c0 0) 0 0 / 10px 10px;
}

.hash {
    position: absolute;
    left: 130px;
    top: 78px;
    font-size: 13px;
    font-weight: bold;
}

.canvas-button {
    position: absolute;
    left: 230px;
    top: 120px;
    width: 140px;
    height: 70px;
    border: 1px solid #646464;
    background: #efefef;
    box-shadow: inset 2px 2px #fff, inset -2px -2px #a0a0a0;
    font-size: 13px;
    font-weight: bold;
}

/* dialog */
.dialog {
    position: absolute;
    left: 124px;
    top: 242px;
    width: 405px;
    padding: 0 6px 6px;
    border: 1px solid #3c444c;
    border-radius: 6px;
    background: linear-gradient(90deg, #c4d8ec, #d0f6ff 25%, #c4f4fc 60%, #d4fcff 95%, #b4ccec) 0 0 / 100% 29px no-repeat,
        linear-gradient(#b6c6d8, #8798aa);
    box-shadow: inset 0 0 0 1px #d8ecf8;
    font: 12px/14px "DejaVu Sans Condensed", "Noto Sans CJK SC", sans-serif;
}

/* top edge of the dialog behind */
.dialog::before {
    content: "";
    position: absolute;
    top: -5px;
    left: 12px;
    right: 12px;
    height: 4px;
    border: 1px solid #4c5c6c;
    border-bottom: none;
    border-radius: 4px 4px 0 0;
    background: #c8dcec;
}

.dialog h2 {
    height: 28px;
    padding-top: 7px;
}

.client {
    height: 269px;
    padding: 2px 17px 0;
    border: 1px solid #5c6c7c;
    background: #f0f0f0;
}

.top {
    display: flex;
    gap: 16px;
}

.fields {
    display: flex;
    flex-direction: column;
    width: 270px;
}

.fields label {
    line-height: 25px;
}

.fields input {
    width: 100%;
    height: 20px;
    padding: 0 2px;
    border: 1px solid #e2e6ec;
    border-top-color: #abadb3;
    border-radius: 1px;
    background: #fff;
    font: 11px/14px "DejaVu Sans Condensed", "Liberation Sans", sans-serif;
}

.name-row {
    display: flex;
    align-items: center;
    height: 20px;
}

.name-row label {
    width: 73px;
}

.name-row input {
    width: 98px;
}

.buttons {
    display: flex;
    flex-direction: column;
    gap: 8px;
    width: 64px;
    padding-top: 7px;
}

.buttons button {
    height: 21px;
    border: 1px solid #707070;
    border-radius: 3px;
    background: linear-gradient(#f2f2f2 50%, #dddddd 50%, #cfcfcf);
    box-shadow: inset 0 0 0 1px #fcfcfc;
    white-space: nowrap;
}

.buttons .failover {
    margin-top: 4px;
    border-color: #adb2b5;
    background: #f4f4f4;
    color: #838383;
    font-size: 11px;
}

fieldset {
    height: 38px;
    margin: 4px 10px 6px 0;
    padding: 0 17px;
    border: 1px solid #d5dfe5;
    border-radius: 3px;
    box-shadow: inset 0 0 0 1px #fff;
}

fieldset + fieldset {
    margin-top: 0;
}

legend {
    margin-left: -11px;
    padding: 0 2px;
    background: #f0f0f0;
}

.protocols, .advise {
    display: grid;
    grid-template-columns: 87px 105px 1fr;
    padding-top: 3px;
}

.advise {
    grid-template-columns: 151px 1fr;
}

.client label {
    white-space: nowrap;
}

.protocols label, .advise label, .secondary {
    display: flex;
    align-items: center;
    gap: 4px;
}

.off {
    color: #838383;
}

input[type="radio"] {
    appearance: none;
    width: 12px;
    height: 12px;
    margin: 0;
    border: 1px solid #8e8f8f;
    border-radius: 50%;
    background: radial-gradient(circle at 60% 60%, #f8f8f8 30%, #cdd1d4);
    box-shadow: inset 0 0 0 1px #f4f4f4;
}

input[type="radio"]:checked {
    border-color: #6c7c8c;
    background: radial-gradient(circle, #58c4ec 0 1px, #0c3c64 2px 3px, #dfe5ea 4px);
}

input[type="radio"]:disabled {
    border-color: #bcbcbc;
    background: #ececec;
}

input[type="checkbox"] {
    appearance: none;
    width: 13px;
    height: 13px;
    margin: 0;
    border: 1px solid #8e8f8f;
    background: linear-gradient(135deg, #cbcfd5, #f6f6f6);
    box-shadow: inset 0 0 0 2px #f4f4f4;
}

.secondary {
    margin-top: 8px;
}

/* red marks */
.mark {
    position: absolute;
    border: 3px solid #ff2312;
    border-radius: 3px;
}

.mark-access {
    left: 603px;
    top: 362px;
    width: 208px;
    height: 53px;
}

.mark-application {
    left: 593px;
    top: 433px;
    width: 170px;
    height: 56px;
}

.mark-topic {
    left: 594px;
    top: 489px;
    width: 159px;
    height: 41px;
}

.mark-tree {
    left: 47px;
    top: 700px;
    width: 90px;
    height: 21px;
}

.arrow {
    position: absolute;
    left: 765px;
    top: 505px;
    width: 128px;
    height: 32px;
}

.note {
    position: absolute;
    left: 915px;
    top: 501px;
    color: #ff2312;
    font-size: 21px;
    line-height: 30px;
    white-space: nowrap;
}
```
